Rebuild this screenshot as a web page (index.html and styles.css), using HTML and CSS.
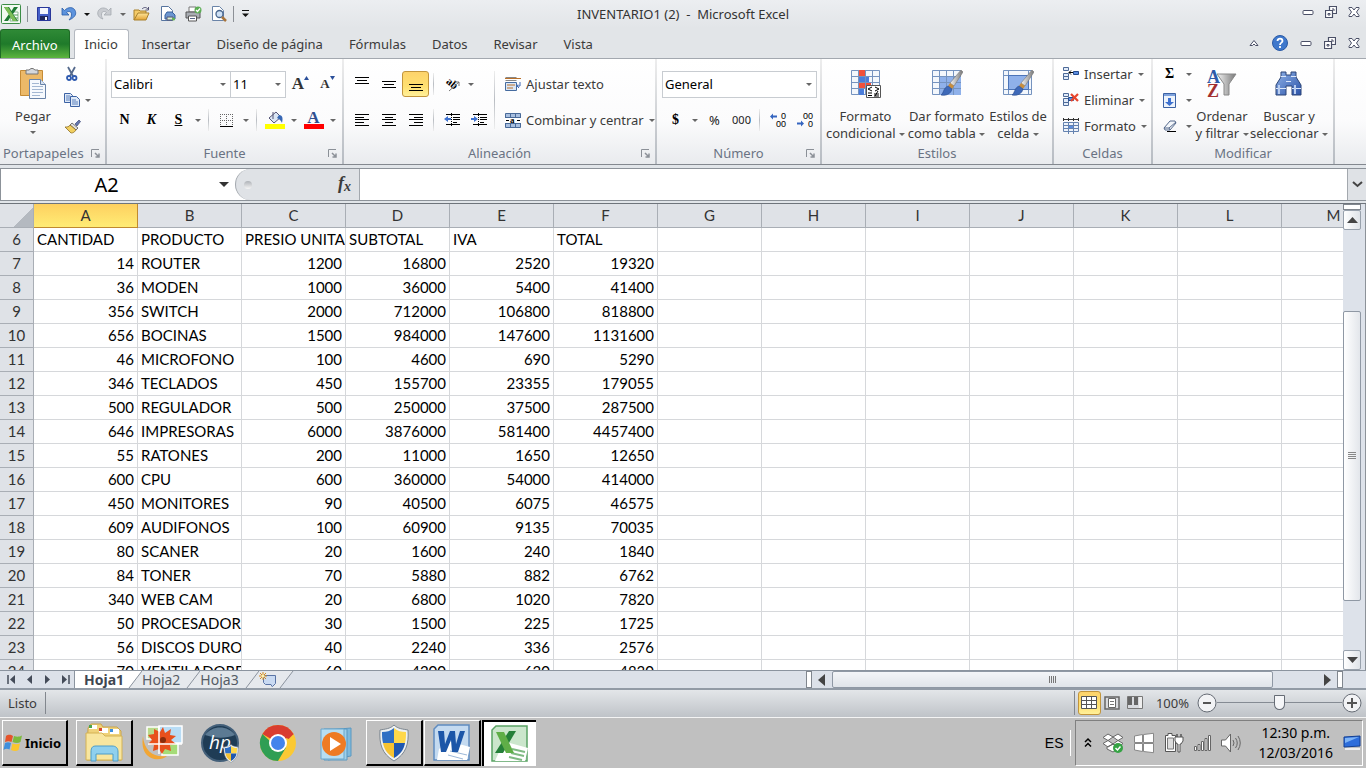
FILE: index.html
```
<!DOCTYPE html>
<html lang="es">
<head>
<meta charset="utf-8">
<title>INVENTARIO1 (2) - Microsoft Excel</title>
<link rel="stylesheet" href="styles.css">
</head>
<body>

<svg class="defs" width="0" height="0" aria-hidden="true">
  <defs>
    <linearGradient id="blue" x1="0" y1="0" x2="1" y2="1"><stop offset="0" stop-color="#8fb2e8"/><stop offset="1" stop-color="#2b53a8"/></linearGradient>
    <linearGradient id="gold" x1="0" y1="0" x2="0" y2="1"><stop offset="0" stop-color="#ffe69a"/><stop offset="1" stop-color="#e2a233"/></linearGradient>
    <linearGradient id="steel" x1="0" y1="0" x2="1" y2="0"><stop offset="0" stop-color="#f4f4f4"/><stop offset="1" stop-color="#777"/></linearGradient>
  </defs>
  <symbol id="xl" viewBox="0 0 20 20">
    <rect x=".5" y=".5" width="19" height="19" rx="1" fill="#f3faf2" stroke="#3c8d46"/>
    <path d="M11 8h6v9h-8z" fill="#fff" stroke="#8fb895"/><path d="M12 11h5M12 14h5" stroke="#4d9a57"/>
    <path d="M3 3h5l2.500 4L13 3h4l-5 7 5 7h-5l-2.500-4L7 17H3l5-7z" fill="#1f7a33"/>
    <path d="M3 3h4l9 14h-4z" fill="#7cbd57"/>
  </symbol>
  <symbol id="launch" viewBox="0 0 9 9"><path d="M.5 8V.5H8" fill="none" stroke="#8b9097"/><path d="M4 4l4 4M8 4.500V8H4.500" fill="none" stroke="#8b9097" stroke-width="1.500"/></symbol>
  <symbol id="brush" viewBox="0 0 22 30">
    <path d="M20 1l2 2-9 14-4-3z" fill="url(#steel)" stroke="#777" stroke-width=".6"/>
    <path d="M9 14l4 3-2 3-4-3z" fill="#c98e3c"/>
    <path d="M7 17l4 3c-1 5-6 7-11 6 3-2 2-7 7-9z" fill="#3e69b8" stroke="#284a8c" stroke-width=".6"/>
  </symbol>
  <symbol id="shield" viewBox="0 0 32 38">
    <path d="M16 1c4 4 9 4 14 5 1 14-2 24-14 31C4 30 1 20 2 6c5-1 10-1 14-5z" fill="#eef1f3" stroke="#7d8790"/>
    <path d="M16 4v15H5c-1-4-1-7-1-11 5 0 8-1 12-4z" fill="#2f6fc4"/><path d="M16 4c4 3 7 4 12 4 0 4 0 7-1 11H16z" fill="#ffd84a"/>
    <path d="M5 19h11v15C9 30 6 25 5 19z" fill="#f7c331"/><path d="M16 19h11c-1 6-4 11-11 15z" fill="#2058b0"/>
  </symbol>
  <symbol id="winmin" viewBox="0 0 12 12"><rect x="1" y="4.500" width="10" height="4" rx="1" fill="#fff" stroke="#4a4f66"/></symbol>
  <symbol id="winmax" viewBox="0 0 12 12"><path d="M4.500.5h7v7h-7z" fill="#fff" stroke="#4a4f66" stroke-width="1.200"/><path d="M7 3h2v2" fill="none" stroke="#4a4f66"/><path d="M.5 4.500h7v7h-7z" fill="#fff" stroke="#4a4f66" stroke-width="1.200"/><path d="M3 7.500h2v1.500H3z" fill="none" stroke="#4a4f66"/></symbol>
  <symbol id="winx" viewBox="0 0 12 12"><path d="M1 1.500h3l2 2.500 2-2.500h3v1L8.500 6 11 9.500v1H8L6 8l-2 2.500H1v-1L3.500 6 1 2.500z" fill="#fff" stroke="#4a4f66"/></symbol>
</svg>

<header class="titlebar">
  <div class="quick">
    <svg width="20" height="20"><use href="#xl"/></svg>
    <span class="bar"></span>
    <button aria-label="Guardar"><svg width="16" height="16"><path d="M1.500 1.500h12l1 1v12h-13z" fill="#4660c8" stroke="#29379a"/><path d="M4 2h8v6H4z" fill="#f4f6fd"/><path d="M4 10h8v4H4z" fill="#20275c"/><path d="M9 11h2v3H9z" fill="#fff"/></svg></button>
    <button aria-label="Deshacer"><svg width="16" height="16"><path d="M1 2v7h7L5.500 6.500C8 4.500 11 5.500 10.500 9c0 2-1 3-2.500 5 5-2 7.500-5 6.500-8.500C13 .5 7 .5 3.500 4.500z" fill="#5d93dd" stroke="#2c5ea8" stroke-width=".8"/></svg></button>
    <button class="drop black" aria-label="Lista deshacer"></button>
    <button aria-label="Rehacer"><svg width="16" height="16"><path d="M14 2v7H7l2.500-2.500C7 4.500 5 5.500 4.500 8c0 2 0 3 1.500 5-4-1-6-4-5-7.500C2.500 1.500 8 .5 11.500 4.500z" fill="#c9ccd1" stroke="#a5a9b0" stroke-width=".8"/></svg></button>
    <button class="drop" aria-label="Lista rehacer"></button>
    <button aria-label="Abrir"><svg width="18" height="16"><path d="M1 14V4h5l1 1h6v3" fill="#f5cb68" stroke="#a8802c"/><path d="M1 14l4-7h11l-3 7z" fill="url(#gold)" stroke="#a8802c"/><path d="M9 3c2-2 4-2 6 0M15.500 1v3h-3" fill="none" stroke="#557"/></svg></button>
    <button aria-label="Impresión rápida"><svg width="16" height="16"><path d="M1.500.5h7l4 4v10h-11z" fill="#fff" stroke="#56749f"/><path d="M5 9l2-3h5l3 3v4H5z" fill="#6c96cf" stroke="#355f9d"/><path d="M7 11h6v3H7z" fill="#d9f0d2" stroke="#557"/><circle cx="13.500" cy="13" r="1.500" fill="#62b54f"/></svg></button>
    <button aria-label="Imprimir"><svg width="17" height="16"><path d="M4 1h7v5H4z" fill="#fff" stroke="#777"/><path d="M1 6h14v6H1z" fill="#a9adb3" stroke="#555"/><path d="M3.500 10h8v5h-8z" fill="#fff" stroke="#555"/><path d="M5 12.500h5" stroke="#568"/><circle cx="13" cy="4" r="3.500" fill="#5cad54"/><path d="M11 4l1.500 1.500L15 2.500" fill="none" stroke="#fff" stroke-width="1.300"/></svg></button>
    <button aria-label="Vista previa"><svg width="16" height="16"><path d="M1.500.5h7l4 4v10h-11z" fill="#fff" stroke="#6a84a8"/><circle cx="8.500" cy="8" r="3.500" fill="#cfe1f5" stroke="#48658c" stroke-width="1.300"/><path d="M11 11l4 4" stroke="#a9743a" stroke-width="2.500"/></svg></button>
    <span class="bar"></span>
    <button aria-label="Personalizar"><svg width="8" height="8"><path d="M0 .5h7" stroke="#111"/><path d="M0 3.500h7L3.500 7z" fill="#111"/></svg></button>
  </div>
  <h1 class="title">INVENTARIO1 (2)&nbsp; -&nbsp; Microsoft Excel</h1>
  <div class="winbtns">
    <button aria-label="Minimizar"><svg width="12" height="12"><use href="#winmin"/></svg></button>
    <button aria-label="Restaurar"><svg width="12" height="12"><use href="#winmax"/></svg></button>
    <button aria-label="Cerrar"><svg width="12" height="12"><use href="#winx"/></svg></button>
  </div>
</header>

<nav class="tabs">
  <button class="tab file">Archivo</button>
  <button class="tab active">Inicio</button>
  <button class="tab">Insertar</button>
  <button class="tab">Diseño de página</button>
  <button class="tab">Fórmulas</button>
  <button class="tab">Datos</button>
  <button class="tab">Revisar</button>
  <button class="tab">Vista</button>
  <div class="winbtns">
    <button aria-label="Minimizar cinta"><svg width="12" height="12"><path d="M2 8.500l4-5 4 5H7.500L6 7 4.500 8.500z" fill="#fff" stroke="#4a4f66"/></svg></button>
    <button aria-label="Ayuda"><svg width="16" height="16"><circle cx="8" cy="8" r="7.500" fill="#3f78cc" stroke="#2a5aa6"/><path d="M5.500 6c0-3.300 5-3.300 5 0 0 1.700-2.500 1.700-2.500 4M8 11v2" fill="none" stroke="#fff" stroke-width="1.800"/></svg></button>
    <button aria-label="Minimizar libro"><svg width="12" height="12"><use href="#winmin"/></svg></button>
    <button aria-label="Restaurar libro"><svg width="12" height="12"><use href="#winmax"/></svg></button>
    <button aria-label="Cerrar libro"><svg width="12" height="12"><use href="#winx"/></svg></button>
  </div>
</nav>

<section class="ribbon">
  <div class="group clipboard">
    <div class="tools">
      <button class="big"><svg width="30" height="32"><path d="M2.500 2.500h22v25h-22z" fill="#ecb968" stroke="#c58b35"/><path d="M8 2h3l2-1.500h2L17 2h3v4H8z" fill="#d5d8dc" stroke="#777"/><path d="M11.500 11.500h11l5 5v14h-16z" fill="#f6f9fd" stroke="#6983a8"/><path d="M22.500 11.500v5h5" fill="#d8e3f1" stroke="#6983a8"/><path d="M14 15.500h7M14 18.500h11M14 21.500h11M14 24.500h11M14 27.500h8" stroke="#a3b7d2"/></svg><span>Pegar</span><i class="arrow"></i></button>
      <div class="stack">
        <div class="row"><button class="tool" aria-label="Cortar"><svg width="14" height="16"><path d="M3 1l5 9M10 1L5 10" stroke="#556a8c" stroke-width="1.800"/><circle cx="4" cy="12" r="2" fill="none" stroke="#2f5bb0" stroke-width="1.800"/><circle cx="9.500" cy="12" r="2" fill="none" stroke="#2f5bb0" stroke-width="1.800"/></svg></button></div>
        <div class="row"><button class="tool" aria-label="Copiar"><svg width="16" height="14"><path d="M.5.5h6l2 2v7h-8z" fill="#dfe9f7" stroke="#3c62a4"/><path d="M2 3h4M2 5h5M2 7h5" stroke="#5b80bd"/><path d="M6.500 3.500h6l3 3v7h-9z" fill="#dfe9f7" stroke="#3c62a4"/><path d="M8 7h4M8 9h6M8 11h6" stroke="#5b80bd"/></svg></button><button class="drop" aria-label="Opciones de copiar"></button></div>
        <div class="row"><button class="tool" aria-label="Copiar formato"><svg width="17" height="15"><path d="M11 5l4-4 1.500 1.500L13 7z" fill="#6376ad" stroke="#3e4b78" stroke-width=".7"/><path d="M8 4l6 5-2 2-6-5z" fill="#ddd" stroke="#555" stroke-width=".8"/><path d="M6 6l6 5c-2 3-4 3-5 3L1 8c2 0 4 0 5-2z" fill="#f1cf60" stroke="#8d6d25" stroke-width=".8"/></svg></button></div>
      </div>
    </div>
    <h2>Portapapeles<svg width="9" height="9"><use href="#launch"/></svg></h2>
  </div>

  <div class="group font">
    <div class="tools lines">
      <div class="row">
        <label class="combo family"><select aria-label="Fuente"><option>Calibri</option></select></label><label class="combo size"><select aria-label="Tamaño"><option>11</option></select></label>
        <button class="tool serif grow" aria-label="Aumentar tamaño">A<svg width="5" height="4"><path d="M0 4h5L2.500 0z" fill="#2b4f9a"/></svg></button>
        <button class="tool serif shrink" aria-label="Disminuir tamaño">A<svg width="5" height="4"><path d="M0 0h5L2.500 4z" fill="#2b4f9a"/></svg></button>
      </div>
      <div class="row">
        <button class="tool serif">N</button><button class="tool serif"><em>K</em></button><button class="tool serif"><u>S</u></button><button class="drop" aria-label="Subrayado"></button>
        <span class="sep"></span>
        <button class="tool" aria-label="Bordes"><svg width="13" height="13"><path d="M.5 0v12M6.500 0v12M12.500 0v12M0 .5h13M0 6.500h13" stroke="#666" stroke-dasharray="1 1"/><path d="M0 12.500h13" stroke="#000"/></svg></button><button class="drop" aria-label="Tipos de borde"></button>
        <span class="sep"></span>
        <button class="tool" aria-label="Color de relleno"><svg width="20" height="18"><path d="M4 7l7-6 5 5-7 6z" fill="#dbe6f4" stroke="#557"/><path d="M8 8V1" stroke="#557"/><path d="M14 4c4 0 4 4 3 8-1-2-2-4-5-5z" fill="#3767b4"/><path d="M0 13h20v5H0z" fill="#ff0"/></svg></button><button class="drop" aria-label="Colores de relleno"></button>
        <button class="tool serif ink" aria-label="Color de fuente">A</button><button class="drop" aria-label="Colores de fuente"></button>
      </div>
    </div>
    <h2>Fuente<svg width="9" height="9"><use href="#launch"/></svg></h2>
  </div>

  <div class="group align">
    <div class="tools">
      <div class="lines">
        <div class="row">
          <button class="tool" aria-label="Arriba"><svg width="14" height="18"><path d="M0 2.500h14M2 5.500h10M0 8.500h14" stroke="#000"/></svg></button>
          <button class="tool" aria-label="Medio"><svg width="14" height="18"><path d="M0 6.500h14M2 9.500h10M0 12.500h14" stroke="#000"/></svg></button>
          <button class="tool on" aria-label="Abajo"><svg width="14" height="18"><path d="M0 9.500h14M2 12.500h10M0 15.500h14" stroke="#000"/></svg></button>
          <span class="sep"></span>
          <button class="tool" aria-label="Orientación"><svg width="16" height="16"><text x="2" y="11" transform="rotate(40 8 8)" class="ab">ab</text><path d="M5 15l10-9M15 10V6h-4" fill="none" stroke="#777"/></svg></button><button class="drop" aria-label="Orientaciones"></button>
        </div>
        <div class="row">
          <button class="tool" aria-label="Izquierda"><svg width="14" height="12"><path d="M0 .5h14M0 3.500h9M0 5.500h14M0 8.500h9M0 11.500h14" stroke="#000"/></svg></button>
          <button class="tool" aria-label="Centrar"><svg width="14" height="12"><path d="M0 .5h14M3 3.500h8M0 5.500h14M3 8.500h8M0 11.500h14" stroke="#000"/></svg></button>
          <button class="tool" aria-label="Derecha"><svg width="14" height="12"><path d="M0 .5h14M5 3.500h9M0 5.500h14M5 8.500h9M0 11.500h14" stroke="#000"/></svg></button>
          <span class="sep"></span>
          <button class="tool" aria-label="Disminuir sangría"><svg width="16" height="14"><path d="M2 1.500h14M9 4.500h7M9 6.500h7M9 9.500h4M2 11.500h14" stroke="#000"/><path d="M7.500 0v14" stroke="#000" stroke-dasharray="1 1"/><path d="M0 6l4-3v2h3v2H4v2z" fill="#3d71d0"/></svg></button>
          <button class="tool" aria-label="Aumentar sangría"><svg width="16" height="14"><path d="M2 1.500h14M9 4.500h7M9 6.500h7M9 9.500h4M2 11.500h14" stroke="#000"/><path d="M7.500 0v14" stroke="#000" stroke-dasharray="1 1"/><path d="M7 6L3 3v2H0v2h3v2z" fill="#3d71d0"/></svg></button>
        </div>
      </div>
      <span class="sep tall"></span>
      <div class="lines">
        <button class="wide"><svg width="16" height="16"><path d="M.5 1.500h11M.5 4.500h11" stroke="#888"/><path d="M0 2.500h16" stroke="#b9702a"/><path d="M.5 6.500h11v8H.5z" fill="#dce7f5" stroke="#456b9f"/><path d="M2 9h8M2 12h6" stroke="#b9702a"/><path d="M15 6v4h-3l1-1.500M12 10l2 2" fill="none" stroke="#3a67b5"/></svg>Ajustar texto</button>
        <button class="wide"><svg width="16" height="15"><path d="M.5.5h15v14H.5z" fill="#a8bfdf" stroke="#496a99"/><path d="M0 4h16v7H0z" fill="#fff"/><path d="M0 4.500h16M0 10.500h16M5.500 0v4M10.500 0v4M5.500 11v4M10.500 11v4" stroke="#496a99"/><text x="5" y="10" class="mini">a</text><path d="M1 7.500h3M12 7.500h3" stroke="#000"/></svg>Combinar y centrar<i class="arrow"></i></button>
      </div>
    </div>
    <h2>Alineación<svg width="9" height="9"><use href="#launch"/></svg></h2>
  </div>

  <div class="group number">
    <div class="tools lines">
      <div class="row"><label class="combo format"><select aria-label="Formato de número"><option>General</option></select></label></div>
      <div class="row">
        <button class="tool serif">$</button><button class="drop" aria-label="Monedas"></button><button class="tool">%</button><button class="tool zeros">000</button>
        <span class="sep"></span>
        <button class="tool" aria-label="Aumentar decimales"><svg width="16" height="14"><text x="11" y="6" class="digit">0</text><text x="6" y="14" class="digit">00</text><path d="M0 3.500l3-3v2h4v2H3v2z" fill="#3565c0"/></svg></button>
        <button class="tool" aria-label="Disminuir decimales"><svg width="16" height="14"><text x="6" y="6" class="digit">00</text><text x="11" y="14" class="digit">0</text><path d="M7 10.500l-3-3v2H0v2h4v2z" fill="#3565c0"/></svg></button>
      </div>
    </div>
    <h2>Número<svg width="9" height="9"><use href="#launch"/></svg></h2>
  </div>

  <div class="group styles">
    <div class="tools">
      <button class="big"><svg width="32" height="32"><path d="M1.500 2.500h28v24h-28z" fill="#f3f7fc" stroke="#7593bf"/><path d="M8 2h8v6H8zM8 14h13v6H8z" fill="#f2513a"/><path d="M8 8h11v6H8zM8 20h6v7H8z" fill="#4b7ddb"/><path d="M8.500 2v25M15.500 2v25M22.500 2v25M1 8.500h29M1 14.500h29M1 20.500h29" stroke="#7593bf"/><path d="M16.500 17.500h14v12h-14z" fill="#fff" stroke="#555"/><path d="M22 19l-4 2 4 2M18 25h4M18 27.500h4M25 19l4 2-4 2M24 26h5M28 23l-3 5M24 28h5" fill="none" stroke="#000"/></svg><span>Formato</span><span>condicional <i class="arrow"></i></span></button>
      <button class="big"><svg width="32" height="32"><path d="M1.500 2.500h28v24h-28z" fill="#f3f7fc" stroke="#7593bf"/><path d="M8 8h22v19H8z" fill="#8fb1ea"/><path d="M8.500 2v25M15.500 2v25M22.500 2v25M1 8.500h29M1 14.500h29M1 20.500h29" stroke="#7593bf"/><use href="#brush" x="10" y="1" width="22" height="30"/></svg><span>Dar formato</span><span>como tabla <i class="arrow"></i></span></button>
      <button class="big"><svg width="32" height="32"><path d="M1.500 2.500h28v24h-28z" fill="#f3f7fc" stroke="#7593bf"/><path d="M6.500 2v25M26.500 2v25M1 7.500h29M1 21.500h29" stroke="#7593bf"/><path d="M6.500 7.500h20v14h-20z" fill="#8fb1ea" stroke="#4b74b8"/><use href="#brush" x="10" y="1" width="22" height="30"/></svg><span>Estilos de</span><span>celda <i class="arrow"></i></span></button>
    </div>
    <h2>Estilos</h2>
  </div>

  <div class="group cells">
    <div class="tools stack">
      <button class="wide"><svg width="16" height="14"><path d="M.5.500h5v3h-5zM.5 6.500h5v3h-5zM.5 9.500h5v3h-5z" fill="#e2ebf8" stroke="#4d6a98"/><path d="M10.500 4.500h5v3h-5z" fill="#5c8de0" stroke="#234a8c"/><path d="M6 5.500h4M8 3.500l-2 2 2 2" stroke="#000" fill="none"/></svg>Insertar<i class="arrow"></i></button>
      <button class="wide"><svg width="16" height="14"><path d="M.5.500h5v3h-5zM.5 9.500h5v3h-5zM.5 5.500h5v4h-5z" fill="#e2ebf8" stroke="#4d6a98"/><path d="M5.500 4.500h5v3h-5z" fill="#5c8de0" stroke="#234a8c"/><path d="M8 1l7 7M15 1L8 8" stroke="#e8452c" stroke-width="2.200"/></svg>Eliminar<i class="arrow"></i></button>
      <button class="wide"><svg width="16" height="16"><path d="M1 1.500h14M.5 0v3M15.500 0v3M5.500 0v3M10.500 0v3" stroke="#333"/><path d="M.5 4.500h15v9H.5z" fill="#eef3fb" stroke="#6583b0"/><path d="M5 7h6v4H5z" fill="#5c8de0"/><path d="M5.500 4v12M10.500 4v12M0 7.500h16M0 10.500h16" stroke="#6583b0"/></svg>Formato<i class="arrow"></i></button>
    </div>
    <h2>Celdas</h2>
  </div>

  <div class="group edit">
    <div class="tools">
      <div class="stack">
        <div class="row"><button class="tool serif">Σ</button><button class="drop" aria-label="Funciones"></button></div>
        <div class="row"><button class="tool" aria-label="Rellenar"><svg width="13" height="15"><path d="M.5.5h12v14H.5z" fill="#edf3fb" stroke="#3c62a4"/><path d="M1 1h11v2H1z" fill="#7ea2dc"/><path d="M5 5h3v4h3l-4.500 4L2 9h3z" fill="#3d71d0"/></svg></button><button class="drop" aria-label="Opciones de relleno"></button></div>
        <div class="row"><button class="tool" aria-label="Borrar"><svg width="15" height="13"><path d="M2 8l6-7h5l1 2-6 7H3z" fill="#f4f7fb" stroke="#55698c"/><path d="M2 8h5l7-6M7 8l1 2" fill="none" stroke="#55698c"/><path d="M5 11.500h9" stroke="#000"/></svg></button><button class="drop" aria-label="Opciones de borrar"></button></div>
      </div>
      <button class="big"><svg width="32" height="32"><text x="1" y="15" class="az blue">A</text><text x="1" y="29" class="az red">Z</text><path d="M11 6h19l-7 10v11h-5V16z" fill="url(#steel)" stroke="#888"/></svg><span>Ordenar</span><span>y filtrar <i class="arrow"></i></span></button>
      <button class="big"><svg width="32" height="32"><path d="M8 4h5v3h5V4h5v5l5 8v10h-9v-9h-6v9H3V17l5-8z" fill="url(#blue)" stroke="#2c4576"/><path d="M3 20.500h10M19 20.500h9M8 8.500h5M18 8.500h5M13 13.500h5" stroke="#dbe7fa"/><path d="M6 17v9M22 17v9" stroke="#b9cdf0" stroke-width="2"/></svg><span>Buscar y</span><span>seleccionar <i class="arrow"></i></span></button>
    </div>
    <h2>Modificar</h2>
  </div>
</section>

<section class="formula">
  <input class="name" aria-label="Cuadro de nombres" value="A2">
  <button class="drop dark" aria-label="Nombres"></button>
  <div class="fx"><span class="knob"></span><em>f<sub>x</sub></em></div>
  <input class="content" aria-label="Barra de fórmulas">
  <button class="expand" aria-label="Expandir"><svg width="11" height="7"><path d="M1 1l4.500 4L10 1" fill="none" stroke="#444" stroke-width="2"/></svg></button>
</section>

<main class="sheet">
  <div class="grid">
    <table>
      <thead>
        <tr><th class="corner"></th><th class="sel">A</th><th>B</th><th>C</th><th>D</th><th>E</th><th>F</th><th>G</th><th>H</th><th>I</th><th>J</th><th>K</th><th>L</th><th>M</th></tr>
      </thead>
      <tbody>
        <tr class="heads"><th>6</th><td>CANTIDAD</td><td>PRODUCTO</td><td>PRESIO UNITARIO</td><td>SUBTOTAL</td><td>IVA</td><td>TOTAL</td><td></td><td></td><td></td><td></td><td></td><td></td><td></td></tr>
        <tr><th>7</th><td>14</td><td>ROUTER</td><td>1200</td><td>16800</td><td>2520</td><td>19320</td><td></td><td></td><td></td><td></td><td></td><td></td><td></td></tr>
        <tr><th>8</th><td>36</td><td>MODEN</td><td>1000</td><td>36000</td><td>5400</td><td>41400</td><td></td><td></td><td></td><td></td><td></td><td></td><td></td></tr>
        <tr><th>9</th><td>356</td><td>SWITCH</td><td>2000</td><td>712000</td><td>106800</td><td>818800</td><td></td><td></td><td></td><td></td><td></td><td></td><td></td></tr>
        <tr><th>10</th><td>656</td><td>BOCINAS</td><td>1500</td><td>984000</td><td>147600</td><td>1131600</td><td></td><td></td><td></td><td></td><td></td><td></td><td></td></tr>
        <tr><th>11</th><td>46</td><td>MICROFONO</td><td>100</td><td>4600</td><td>690</td><td>5290</td><td></td><td></td><td></td><td></td><td></td><td></td><td></td></tr>
        <tr><th>12</th><td>346</td><td>TECLADOS</td><td>450</td><td>155700</td><td>23355</td><td>179055</td><td></td><td></td><td></td><td></td><td></td><td></td><td></td></tr>
        <tr><th>13</th><td>500</td><td>REGULADOR</td><td>500</td><td>250000</td><td>37500</td><td>287500</td><td></td><td></td><td></td><td></td><td></td><td></td><td></td></tr>
        <tr><th>14</th><td>646</td><td>IMPRESORAS</td><td>6000</td><td>3876000</td><td>581400</td><td>4457400</td><td></td><td></td><td></td><td></td><td></td><td></td><td></td></tr>
        <tr><th>15</th><td>55</td><td>RATONES</td><td>200</td><td>11000</td><td>1650</td><td>12650</td><td></td><td></td><td></td><td></td><td></td><td></td><td></td></tr>
        <tr><th>16</th><td>600</td><td>CPU</td><td>600</td><td>360000</td><td>54000</td><td>414000</td><td></td><td></td><td></td><td></td><td></td><td></td><td></td></tr>
        <tr><th>17</th><td>450</td><td>MONITORES</td><td>90</td><td>40500</td><td>6075</td><td>46575</td><td></td><td></td><td></td><td></td><td></td><td></td><td></td></tr>
        <tr><th>18</th><td>609</td><td>AUDIFONOS</td><td>100</td><td>60900</td><td>9135</td><td>70035</td><td></td><td></td><td></td><td></td><td></td><td></td><td></td></tr>
        <tr><th>19</th><td>80</td><td>SCANER</td><td>20</td><td>1600</td><td>240</td><td>1840</td><td></td><td></td><td></td><td></td><td></td><td></td><td></td></tr>
        <tr><th>20</th><td>84</td><td>TONER</td><td>70</td><td>5880</td><td>882</td><td>6762</td><td></td><td></td><td></td><td></td><td></td><td></td><td></td></tr>
        <tr><th>21</th><td>340</td><td>WEB CAM</td><td>20</td><td>6800</td><td>1020</td><td>7820</td><td></td><td></td><td></td><td></td><td></td><td></td><td></td></tr>
        <tr><th>22</th><td>50</td><td>PROCESADOR</td><td>30</td><td>1500</td><td>225</td><td>1725</td><td></td><td></td><td></td><td></td><td></td><td></td><td></td></tr>
        <tr><th>23</th><td>56</td><td>DISCOS DUROS</td><td>40</td><td>2240</td><td>336</td><td>2576</td><td></td><td></td><td></td><td></td><td></td><td></td><td></td></tr>
        <tr><th>24</th><td>70</td><td>VENTILADORES</td><td>60</td><td>4200</td><td>630</td><td>4830</td><td></td><td></td><td></td><td></td><td></td><td></td><td></td></tr>
      </tbody>
    </table>
  </div>
  <div class="vscroll">
    <span class="split"></span>
    <button aria-label="Subir"><svg width="11" height="6"><path d="M0 6h11L5.500 0z" fill="#444"/></svg></button>
    <span class="track"><span class="thumb"><svg width="8" height="8"><path d="M0 .5h8M0 2.500h8M0 4.500h8M0 6.500h8" stroke="#888"/></svg></span></span>
    <button aria-label="Bajar"><svg width="11" height="6"><path d="M0 0h11L5.500 6z" fill="#444"/></svg></button>
  </div>
</main>

<section class="bottom">
  <div class="sheets">
    <button class="nav" aria-label="Primera hoja"><svg width="9" height="9"><path d="M1 0v9" stroke="#444b58" stroke-width="1.500"/><path d="M8 0v9L3 4.500z" fill="#444b58"/></svg></button>
    <button class="nav" aria-label="Hoja anterior"><svg width="9" height="9"><path d="M7 0v9L2 4.500z" fill="#444b58"/></svg></button>
    <button class="nav" aria-label="Hoja siguiente"><svg width="9" height="9"><path d="M2 0v9l5-4.500z" fill="#444b58"/></svg></button>
    <button class="nav" aria-label="Última hoja"><svg width="9" height="9"><path d="M1 0v9l5-4.500z" fill="#444b58"/><path d="M8 0v9" stroke="#444b58" stroke-width="1.500"/></svg></button>
    <button class="leaf current">Hoja1</button>
    <svg class="slash" width="14" height="17"><path d="M0 0h14L1 17H0z" fill="#fff"/><path d="M14 0v17H1z" fill="#e6e9ed"/><path d="M14 0L1 17" stroke="#8b939e"/></svg>
    <button class="leaf">Hoja2</button>
    <svg class="slash" width="14" height="17"><path d="M0 0h14v17H0z" fill="#e6e9ed"/><path d="M14 0L1 17" stroke="#8b939e"/></svg>
    <button class="leaf">Hoja3</button>
    <svg class="slash" width="14" height="17"><path d="M0 0h14v17H0z" fill="#e6e9ed"/><path d="M14 0L1 17" stroke="#8b939e"/></svg>
    <button class="leaf new" aria-label="Insertar hoja"><svg width="18" height="15"><path d="M4.500 3.500h12v8l-3 3H13l-1-2H6.500l-2-2z" fill="#c9daf2" stroke="#5a74a5"/><path d="M4 0v8M0 4h8M1 1l6 6M7 1L1 7" stroke="#d68a1d"/><circle cx="4" cy="4" r="1.500" fill="#fff3b0"/></svg></button>
    <svg class="slash" width="14" height="17"><path d="M0 0h14L1 17H0z" fill="#e6e9ed"/><path d="M14 0L1 17" stroke="#8b939e"/></svg>
  </div>
  <div class="hscroll">
    <span class="split"></span>
    <button aria-label="Izquierda"><svg width="7" height="12"><path d="M7 0v12L0 6z" fill="#444"/></svg></button>
    <span class="track"><span class="thumb"><svg width="8" height="7"><path d="M.5 0v7M2.500 0v7M4.500 0v7M6.500 0v7" stroke="#777"/></svg></span></span>
    <button aria-label="Derecha"><svg width="7" height="12"><path d="M0 0v12l7-6z" fill="#444"/></svg></button>
    <span class="split"></span>
  </div>
</section>

<footer class="status">
  <span class="ready">Listo</span>
  <div class="views">
    <button class="on" aria-label="Normal"><svg width="16" height="13"><path d="M.5.5h15v12H.5z" fill="#fff" stroke="#555"/><path d="M5.500 0v13M10.500 0v13M0 4.500h16M0 8.500h16" stroke="#555"/></svg></button>
    <button aria-label="Diseño de página"><svg width="16" height="14"><path d="M1 1h14v12H1z" fill="#d8dade" stroke="#666" stroke-width="1.500"/><path d="M4.500 2.500h7v9h-7z" fill="#fff" stroke="#666"/><path d="M6 5.500h4M6 8.500h4" stroke="#777"/></svg></button>
    <button aria-label="Saltos de página"><svg width="16" height="14"><path d="M.5.5h15v12H.5z" fill="#d8dade" stroke="#777"/><path d="M1 1h4v8H1zM7 1h4v8H7z" fill="#666"/><path d="M12 1h3v11h-3z" fill="#eee"/></svg></button>
  </div>
  <button class="pct">100%</button>
  <button class="round" aria-label="Alejar"><svg width="20" height="20"><circle cx="10" cy="10" r="9" fill="#f2f3f5" stroke="#666c75"/><path d="M6 10h8" stroke="#555" stroke-width="2"/></svg></button>
  <input class="zoom" type="range" aria-label="Zoom" min="0" max="100" value="50">
  <button class="round" aria-label="Acercar"><svg width="20" height="20"><circle cx="10" cy="10" r="9" fill="#f2f3f5" stroke="#666c75"/><path d="M5 10h10M10 5v10" stroke="#555" stroke-width="2"/></svg></button>
</footer>

<div class="taskbar">
  <button class="start"><svg width="20" height="20"><path d="M3 3c3-2 5-1 7 0L8.500 9c-2-1-4-1-6.500 0z" fill="#e5532a"/><path d="M11 3c3 1 5 1 8-.5L17.500 9c-3 1.500-5 1-8 0z" fill="#7dba3c"/><path d="M2 10c2-1 4-1 6 0l-1.500 6.500c-2-1-4-1-6 .5z" fill="#3f8fdd"/><path d="M9.500 10.500c2 1 5 1 7.500 0L15.500 17c-2 1.500-5 1-7.500 0z" fill="#fbc62d"/></svg>Inicio</button>
  <button class="task open" aria-label="Explorador"><svg width="42" height="40"><path d="M5 5l3-4h10l2 3h14l4 4v29H4z" fill="#efd27a" stroke="#c9a44c"/><path d="M6 2h8v4H6zM16 5h9v5h-9zM27 6h9v5h-9z" fill="#fff"/><path d="M6 2h3v3H6z" fill="#4ba64c"/><path d="M16 5h3v3h-3z" fill="#d8432c"/><path d="M27 6h3v3h-3z" fill="#3c8ee0"/><path d="M3 10h16l3 3h17v24H3z" fill="#f8e69f" stroke="#d4b255"/><path d="M8 38v-9c0-5 2-6 5-6h16c4 0 6 2 6 6v9h-5v-7H13v7z" fill="#8fd0ee" stroke="#4c9cc8"/></svg></button>
  <button class="task" aria-label="Fotos"><svg width="42" height="40"><path d="M1 13c1 15 11 22 24 20-8 7-28 4-24-20z" fill="#f2a634"/><path d="M5 4h12v12H5z" fill="#b9d98a" stroke="#fff" stroke-width="1.500"/><path d="M20 20h16v12H20z" fill="#a5dc78" stroke="#fff" stroke-width="1.500"/><path d="M17 3h23v17H17z" fill="#b8dcf5" stroke="#fff" stroke-width="1.500"/><path d="M21 4l2 6 6-4-1 6 6 1-5 4 5 4-6 1 1 6-6-2-3 5-3-5-6 2 1-6-6-1 4-4-4-5 6-1 0-5 6 3z" fill="#e8501c"/><path d="M17 3v28M6 21h34" stroke="#fff" stroke-width="1.500"/><circle cx="21" cy="17" r="3" fill="#8a2d0c"/></svg></button>
  <button class="task" aria-label="HP"><svg width="42" height="40"><circle cx="20" cy="20" r="18" fill="#1f3c55" stroke="#44607a" stroke-width="2"/><path d="M5 12C12 2 28 2 35 12 25 16 14 15 5 12z" fill="#5c7a93"/><text x="9" y="26" class="hp">hp</text><use href="#shield" x="23" y="21" width="16" height="19"/></svg></button>
  <button class="task" aria-label="Chrome"><svg width="42" height="40"><circle cx="20" cy="20" r="18" fill="#fbc934"/><path d="M20 20L4.400 11A18 18 0 0 1 35.600 11z" fill="#d93d30"/><path d="M4.400 11A18 18 0 0 0 20 38l8-13.500-8 1z" fill="#2f9e54"/><path d="M20 11h15.600l-5 5z" fill="#d93d30"/><circle cx="20" cy="20" r="9" fill="#fff"/><circle cx="20" cy="20" r="7" fill="#4284ec"/></svg></button>
  <button class="task" aria-label="Reproductor"><svg width="42" height="40"><path d="M12 7l23-2v28l-23 4z" fill="#7fb9dc" stroke="#5b98c0"/><path d="M8 6h23v31H8z" fill="#9fd0ea" stroke="#5b98c0"/><path d="M5 6h23v30H5z" fill="#b7def2" stroke="#6ba6cb"/><circle cx="18" cy="21" r="12" fill="#ee7b24"/><path d="M14 14v14l11-7z" fill="#fff"/></svg></button>
  <button class="task open" aria-label="Seguridad"><svg width="32" height="38"><use href="#shield"/></svg></button>
  <button class="task open" aria-label="Word"><svg width="38" height="38"><path d="M5 1h31v35H1V5z" fill="#c4daf0" stroke="#5f8cc0" stroke-width="1.500"/><path d="M15 17l22 6-3 13H4l2-11z" fill="#fff"/><path d="M17 27l17 4M15 31l15 4" stroke="#9bb7d8"/><path d="M5 7h6l1 13 5-13h5l1 13 4-13h5l-7 21h-6l-1-12-5 12H8z" fill="#1c56a8"/></svg></button>
  <button class="task pressed" aria-label="Excel"><svg width="38" height="38"><path d="M5 1h31v35H1V5z" fill="#cbe6cc" stroke="#5aa364" stroke-width="1.500"/><path d="M15 17l22 6-3 13H4l4-9z" fill="#fff"/><path d="M21 24l13 3M20 28l13 3M18 32l13 3" stroke="#7fba83" stroke-width="2"/><path d="M18 6h7L12 28H4z" fill="#258039"/><path d="M5 7h8l10 21h-8z" fill="#5fae47"/></svg></button>
  <span class="lang">ES</span>
  <div class="tray">
    <svg width="8" height="10"><path d="M1 4l3-3 3 3M1 8.500l3-3 3 3" fill="none" stroke="#000" stroke-width="1.500"/></svg>
    <svg width="22" height="22"><path d="M6 2l5 3-5 3.500L1 5.500zM16 2l5 3.500-5 3L11 5zM6 8.500l5 3.500-5 3-5-3.500zM16 8.500l5 3-5 3.500-5-3zM5 15l6-3 5 3v2l-5 3-6-3z" fill="#fff" stroke="#666"/><circle cx="16" cy="16" r="5" fill="#35a344"/><path d="M13.500 16l2 2 3-3.500" fill="none" stroke="#fff" stroke-width="1.500"/></svg>
    <svg width="20" height="20"><path d="M.5 3l8-1.500v8h-8zM9.500 1.500l10-1.200v9.200h-10zM.5 10.500h8v8L.5 17zM9.500 10.500h10v9.200l-10-1.200z" fill="#fff" stroke="#888"/></svg>
    <svg width="20" height="20"><path d="M1.500 2.500H4v-2h4v2h3.500v16h-10z" fill="#fff" stroke="#555"/><path d="M3.500 5h6v11h-6z" fill="#ddd" stroke="#777"/><path d="M11 4h8v4l-2 3h-1v8h-2v-8h-1l-2-3z" fill="#fff" stroke="#555"/><path d="M13 1v3M17 1v3" stroke="#555" stroke-width="1.500"/></svg>
    <svg width="17" height="16"><path d="M.5 11.500h2v4h-2zM4 9.500h2v6H4zM7.500 6.500h2v9h-2zM11 3.500h2v12h-2zM14.500.5h2v15h-2z" fill="#fff" stroke="#666"/></svg>
    <svg width="20" height="20"><path d="M.5 7h4l5-6v18l-5-6h-4z" fill="#fff" stroke="#666"/><path d="M12 7q2 3 0 6M14.500 5q3.500 5 0 10M17 3q4.500 7 0 14" fill="none" stroke="#666"/></svg>
    <div class="clock"><time>12:30 p.m.</time><time>12/03/2016</time></div>
    <svg width="18" height="16"><path d="M1 2l16-1v10l-16 1z" fill="#2d6ddb" stroke="#123f93"/><path d="M2 3l14-1L2 8z" fill="#7fb4f5"/><path d="M2 13h15v2H2z" fill="#eee"/></svg>
  </div>
</div>

</body>
</html>
```
FILE: styles.css
```
* {
  box-sizing: border-box;
}
body {
  margin: 0;
  height: 100vh;
  display: flex;
  flex-direction: column;
  overflow: hidden;
  background: #e1e5e9;
  color: #3b3b3b;
  font: 13px/16px "Noto Sans", "Open Sans", sans-serif;
}
button, input, select {
  margin: 0;
  padding: 0;
  border: 0;
  background: none;
  color: inherit;
  font: inherit;
}
h1, h2 {
  margin: 0;
  font-size: 13px;
  font-weight: normal;
}
svg {
  display: block;
  flex: none;
  overflow: visible;
}
.defs {
  position: absolute;
}

/* title */
.titlebar {
  display: grid;
  grid-template-columns: 1fr auto 1fr;
  align-items: center;
  height: 28px;
  background: linear-gradient(#eceef1, #e2e5e8);
}
.quick {
  display: flex;
  align-items: center;
  gap: 6px;
  padding-left: 1px;
}
.quick button {
  min-width: 8px;
}
.quick .drop {
  width: 8px;
}
.quick .bar {
  width: 1px;
  height: 16px;
  background: #8c9096;
}
.quick button:not(.drop) + button:not(.drop) {
  margin-left: 3px;
}
.quick .bar + button {
  margin-left: 2px;
}
.winbtns {
  display: flex;
  align-items: center;
  justify-content: flex-end;
  gap: 12px;
  margin-left: auto;
  padding-right: 6px;
}
.titlebar .winbtns {
  gap: 11px;
  padding-bottom: 4px;
}
.title {
  color: #333;
}

/* ribbon tabs */
.tabs {
  display: flex;
  height: 31px;
  flex: none;
  background: #e2e5e8;
  border-bottom: 1px solid #a3a8af;
}
.tab {
  padding: 2px 13px 0;
}
.tab.file {
  margin: 1px 4px 0 0;
  padding: 1px 11px 0;
  border: 1px solid #1d6b25;
  border-bottom: 0;
  border-radius: 3px 3px 0 0;
  background: linear-gradient(#2f8a36, #1f7a2a 50%, #5cb53e);
  color: #fff;
}
.tab.active {
  margin: 1px 0 -1px;
  padding: 0 10px 1px;
  border: 1px solid #b4b9c0;
  border-bottom: 0;
  border-radius: 3px 3px 0 0;
  background: #fff;
}

/* ribbon */
.ribbon {
  display: flex;
  flex: none;
  height: 106px;
  background: linear-gradient(#fff, #fbfbfc 60%, #e9ebee);
  border-bottom: 1px solid #83888f;
}
.group {
  display: flex;
  flex-direction: column;
  flex: none;
  border-right: 2px solid;
  border-image: linear-gradient(#eee, #b5bac1) 1;
}
.group h2 {
  display: grid;
  grid-template-columns: 1fr auto 1fr;
  align-items: center;
  height: 20px;
  padding-bottom: 2px;
  color: #6a7383;
}
.group h2::before {
  content: "";
}
.group h2 svg {
  justify-self: end;
  margin-right: 5px;
}
.clipboard {
  width: 107px;
}
.clipboard h2 {
  grid-template-columns: 0 auto 1fr;
  padding-left: 3px;
}
.font {
  width: 237px;
}
.align {
  width: 313px;
}
.number {
  width: 165px;
}
.styles {
  width: 232px;
}
.cells {
  width: 99px;
}
.edit {
  width: 182px;
}
.tools {
  display: flex;
  flex: 1;
  padding-left: 4px;
}
.number .tools {
  padding-left: 5px;
}
.lines {
  display: flex;
  flex-direction: column;
  gap: 10px;
  padding-top: 12px;
}
.stack {
  display: flex;
  flex-direction: column;
  padding-top: 2px;
}
.row {
  display: flex;
  align-items: center;
  height: 26px;
}
.tool {
  display: flex;
  align-items: center;
  justify-content: center;
  width: 27px;
  height: 26px;
  color: #222;
}
.align .tool {
  width: 27px;
}
.tool.on, .views .on {
  border: 1px solid #c2953c;
  border-radius: 3px;
  background: linear-gradient(#fdd36b, #ffe070 60%, #fff09a);
}
.serif {
  color: #000;
  font: bold 14px/16px "Liberation Serif", serif;
}
.grow, .shrink {
  color: #333;
}
.grow {
  margin-left: 1px;
  font-size: 17px;
}
.shrink {
  font-size: 13px;
}
.grow svg, .shrink svg {
  align-self: flex-start;
  margin-top: 5px;
}
.ink {
  flex-direction: column;
  color: #2f4f8f;
  font-size: 17px;
  line-height: 13px;
}
.ink::after {
  content: "";
  width: 20px;
  height: 5px;
  background: #f00;
}
.zeros {
  font-size: 11px;
}
.mini {
  font: bold 9px "Liberation Serif", serif;
}
.ab {
  font: bold 11px "Liberation Serif", serif;
}
.digit {
  font: 9px "Liberation Sans", sans-serif;
}
.az {
  font: bold 18px "Liberation Serif", serif;
}
.blue {
  fill: #2d5aa8;
}
.red {
  fill: #a33030;
}
.drop {
  display: flex;
  align-items: center;
  justify-content: center;
  width: 12px;
  height: 26px;
}
.arrow, .drop::after, .combo::after {
  content: "";
  display: inline-block;
  border: 3px solid transparent;
  border-top-color: #666;
  border-bottom: 0;
}
.quick .black::after {
  border-top-color: #111;
}
.arrow {
  vertical-align: middle;
}
.sep {
  width: 1px;
  height: 22px;
  margin: 0 4px;
  background: linear-gradient(#eee, #b9bdc3, #eee);
}
.sep.tall {
  height: 58px;
  margin: 12px 10px 0 2px;
}
.combo {
  display: grid;
  align-items: center;
  height: 27px;
  border: 1px solid #c8ccd1;
  background: #fff;
}
.combo::after {
  grid-area: 1 / 1;
  justify-self: end;
  margin-right: 4px;
}
.combo select {
  grid-area: 1 / 1;
  padding-left: 2px;
  height: 100%;
  appearance: none;
  color: #000;
}
.family {
  width: 120px;
}
.size {
  width: 55px;
  border-left: 0;
}
.format {
  width: 155px;
}
.big {
  display: flex;
  flex-direction: column;
  align-items: center;
  padding-top: 9px;
  line-height: 17px;
  white-space: nowrap;
}
.big svg {
  margin-bottom: 8px;
}
.clipboard .big {
  width: 58px;
}
.clipboard .big .arrow {
  margin-top: 6px;
}
.clipboard .tool {
  width: 20px;
}
.styles .tools {
  padding-left: 3px;
}
.styles .big {
  width: 81px;
}
.styles .big:last-child {
  width: 62px;
}
.edit .tools {
  padding-left: 3px;
}
.edit .big {
  width: 54px;
}
.edit .big:last-child {
  width: 80px;
}
.wide {
  display: flex;
  align-items: center;
  gap: 5px;
  height: 26px;
  white-space: nowrap;
}
.cells .tools {
  padding-left: 9px;
}

/* formula bar */
.formula {
  display: flex;
  flex: none;
  height: 33px;
  margin: 3px 0 2px;
  border-top: 1px solid #8c9299;
  border-bottom: 1px solid #8c9299;
  background: #fff;
}
.name {
  width: 212px;
  border-left: 1px solid #8c9299;
  color: #000;
  font-size: 20px;
  text-align: center;
}
.formula .drop {
  width: 23px;
  height: 31px;
}
.dark::after {
  border-width: 5px 5px 0;
  border-top-color: #333;
}
.fx {
  display: flex;
  align-items: center;
  justify-content: space-between;
  width: 125px;
  padding: 0 8px;
  border: 1px solid #a3a8ae;
  border-width: 0 1px;
  border-radius: 16px 0 0 16px;
  background: #dfe2e6;
  font: bold 18px/20px "Liberation Serif", serif;
}
.fx sub {
  font-size: 14px;
  vertical-align: -2px;
}
.knob {
  width: 8px;
  height: 8px;
  border-radius: 4px;
  background: linear-gradient(#aeb2b7, #f6f6f6);
}
.content {
  flex: 1;
}
.expand {
  display: grid;
  place-items: center;
  width: 19px;
  border-left: 1px solid #a3a8ae;
  background: #dfe2e6;
}

/* sheet */
.sheet {
  display: flex;
  flex: 1;
  min-height: 0;
  border-top: 1px solid #6e747b;
}
.grid {
  flex: 1;
  overflow: hidden;
  background: #fff;
}
table {
  width: 1386px;
  table-layout: fixed;
  border-collapse: separate;
  border-spacing: 0;
  color: #000;
  font: 15px/23px Lato, sans-serif;
}
th, td {
  height: 24px;
  padding: 0 3px;
  border: 0 solid #d6d8db;
  border-width: 0 1px 1px 0;
  overflow: hidden;
  text-align: right;
  white-space: nowrap;
}
th {
  padding: 0;
  border-color: #a9aeb5;
  background: #dfe2e7;
  color: #333;
  font-weight: normal;
  text-align: center;
}
td:nth-child(3), .heads td {
  text-align: left;
}
.sel {
  border-color: #c08a30;
  background: linear-gradient(#fdd060, #ffec75);
}
.corner {
  width: 34px;
  background: linear-gradient(135deg, #dfe2e7 65%, #b4b9c0 65%);
}
.vscroll {
  display: flex;
  flex-direction: column;
  width: 23px;
  padding-right: 4px;
  border-right: 1px solid #8c9299;
  background: #dde2ea;
}
.vscroll button {
  display: grid;
  place-items: center;
  height: 20px;
  border: 1px solid #98a1ac;
  border-radius: 2px;
  background: linear-gradient(90deg, #fff, #dfe3e8);
}
.vscroll .split {
  height: 6px;
  border: 1px solid #80868e;
  background: #fff;
}
.vscroll .track {
  display: flex;
  flex-direction: column;
  flex: 1;
  padding: 81px 0 49px;
}
.thumb {
  display: flex;
  align-items: center;
  justify-content: center;
  border: 1px solid #8f98a4;
  border-radius: 2px;
}
.vscroll .thumb {
  flex: 1;
  background: linear-gradient(90deg, #fff, #e3e6eb);
}

/* sheet tabs */
.bottom {
  display: flex;
  flex: none;
  height: 20px;
  padding-right: 23px;
  border-top: 1px solid #8b949f;
  border-bottom: 2px solid #929ba6;
  background: #dce1e9;
}
.sheets {
  display: flex;
  flex: 805;
  padding-left: 2px;
}
.nav {
  display: grid;
  place-items: center;
  width: 18px;
}
.leaf {
  padding-right: 6px;
  background: #e6e9ed;
  color: #555c66;
  font-size: 14px;
}
.leaf.current {
  padding: 0 4px 0 9px;
  border-left: 1px solid #8b949f;
  background: #fff;
  color: #3f4650;
  font-weight: bold;
}
.leaf.new {
  padding: 0 2px 0 0;
}
.hscroll {
  display: flex;
  flex: 538;
}
.hscroll button {
  display: grid;
  place-items: center;
  width: 20px;
}
.hscroll .split {
  width: 6px;
  border: 1px solid #80868e;
  background: #fff;
}
.hscroll .track {
  display: flex;
  flex: 1;
}
.hscroll .thumb {
  width: 91%;
  background: linear-gradient(#f3f5f8, #e0e4e9);
}

/* status bar */
.status {
  display: flex;
  align-items: center;
  flex: none;
  height: 27px;
  padding: 0 4px 2px 0;
  background: linear-gradient(#e3e6e9, #bfc3c8);
}
.ready {
  padding: 3px 8px 3px 8px;
  border-right: 1px solid #82878e;
}
.views {
  display: flex;
  margin-left: auto;
  padding-left: 3px;
  border-left: 1px solid #82878e;
}
.views button {
  display: grid;
  place-items: center;
  width: 23px;
  height: 24px;
}
.pct {
  margin: 0 8px 0 9px;
}
.zoom {
  width: 125px;
  height: 20px;
  appearance: none;
  background: linear-gradient(#858b93, #858b93) center / 100% 1px no-repeat;
}
.zoom::-webkit-slider-thumb {
  appearance: none;
  width: 11px;
  height: 15px;
  border: 1px solid #666c75;
  border-radius: 1px 1px 6px 6px;
  background: #f5f6f8;
}

/* taskbar */
.taskbar {
  display: flex;
  align-items: stretch;
  flex: none;
  height: 51px;
  padding: 2px 3px 2px 2px;
  border-top: 1px solid #f4f4f4;
  background: #c0c0c0;
  color: #000;
}
.start {
  display: flex;
  align-items: center;
  gap: 2px;
  width: 66px;
  margin-right: 8px;
  font-weight: bold;
}
.start, .open {
  border: 1px solid #fff;
  border-right: 2px solid #000;
  border-bottom: 2px solid #000;
}
.task {
  display: grid;
  place-items: center;
  width: 58px;
}
.open {
  width: 57px;
  margin-right: 1px;
}
.pressed {
  width: 54px;
  border: 1px solid #000;
  border-width: 2px 0 0 2px;
  background: #fff;
}
.hp {
  fill: #fff;
  font: italic 19px "Open Sans", sans-serif;
}
.lang {
  align-self: center;
  margin-left: auto;
  padding: 5px 6px;
  border-right: 1px solid #fff;
  font: 14px/16px "Liberation Sans", sans-serif;
}
.tray {
  display: flex;
  align-items: center;
  gap: 10px;
  margin-left: 4px;
  padding: 0 1px 0 8px;
  border: 1px solid #808080;
  border-right-color: #fff;
  border-bottom-color: #fff;
}
.clock {
  display: flex;
  flex-direction: column;
  align-items: center;
  margin-left: 8px;
  font-size: 14px;
  line-height: 20px;
}
```
